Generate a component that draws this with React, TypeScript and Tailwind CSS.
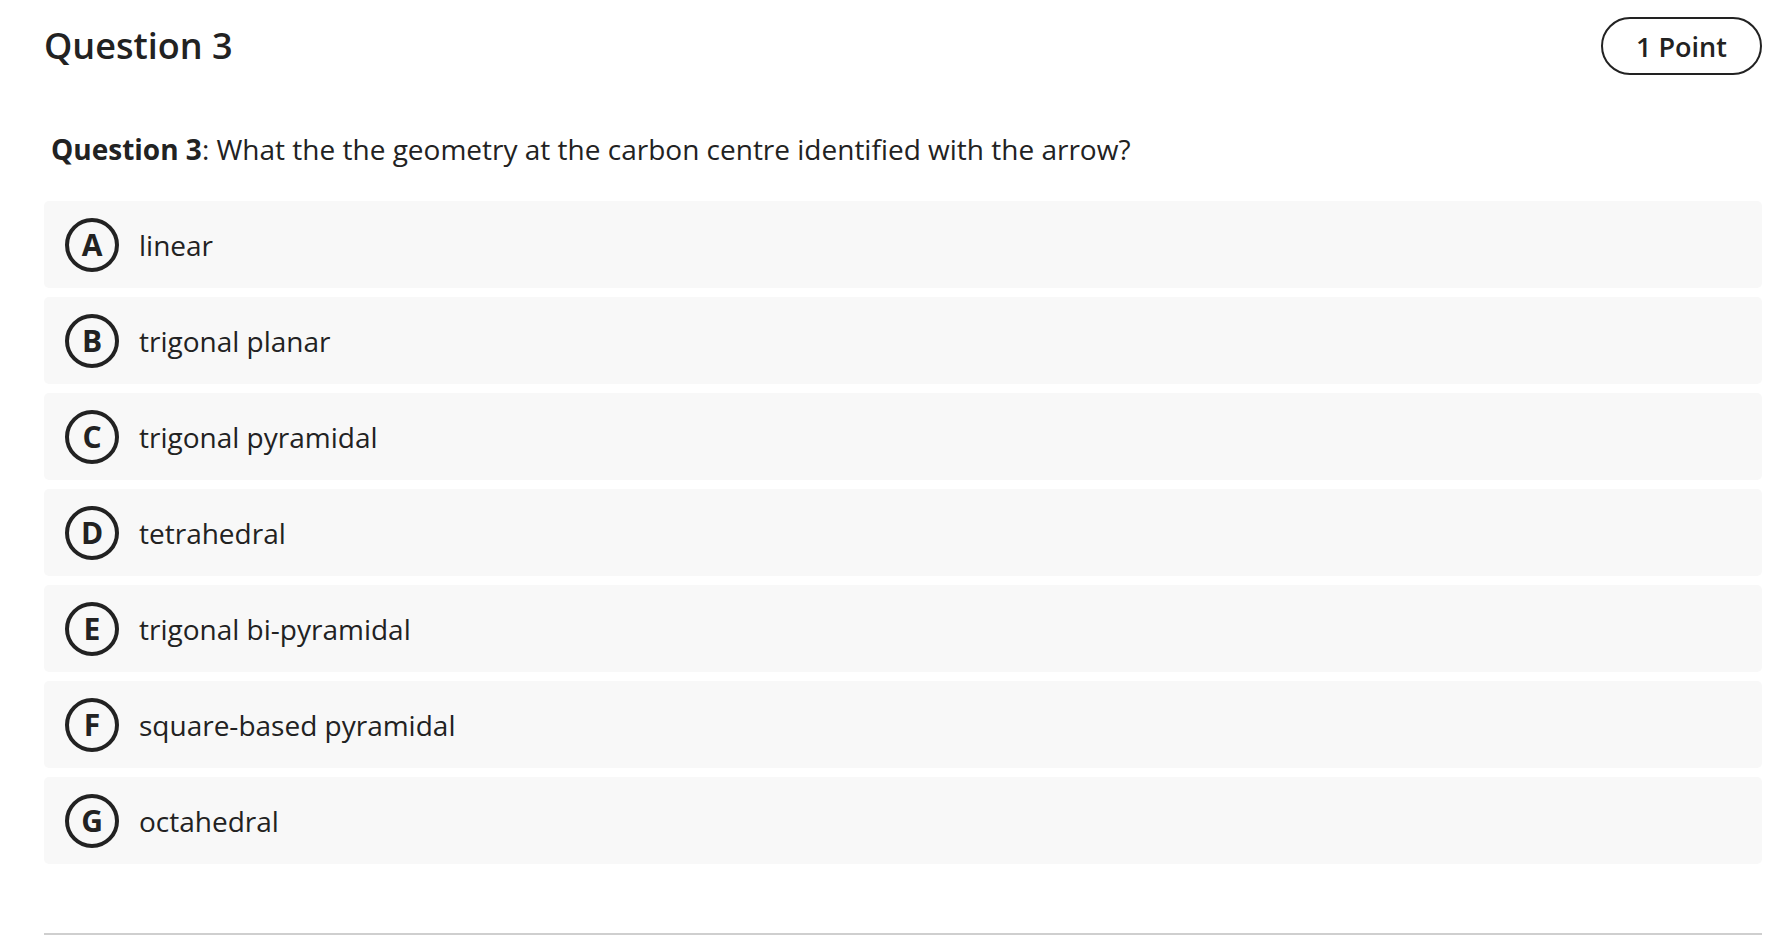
const options = [
  { key: "A", label: "linear" },
  { key: "B", label: "trigonal planar" },
  { key: "C", label: "trigonal pyramidal" },
  { key: "D", label: "tetrahedral" },
  { key: "E", label: "trigonal bi-pyramidal" },
  { key: "F", label: "square-based pyramidal" },
  { key: "G", label: "octahedral" },
];

export default function App() {
  return (
    <div
      className="min-h-screen bg-white pl-[44px] pr-[20px] pt-[17px] text-[#222]"
      style={{ fontFamily: '"Open Sans", "Noto Sans", sans-serif' }}
    >
      <div className="flex items-center justify-between h-[58px]">
        <h2 className="text-[36px] font-semibold leading-[58px]">Question 3</h2>
        <div className="flex items-center justify-center w-[161px] h-[58px] rounded-full border-2 border-[#222] text-[27px] font-semibold leading-none">
          1 Point
        </div>
      </div>

      <p className="mt-[54px] pl-[7px] text-[28px] leading-[40px]">
        <span className="font-bold">Question 3</span>: What the the geometry at the carbon centre identified with the arrow?
      </p>

      <div className="mt-[32px] flex flex-col gap-[9px]">
        {options.map((o) => (
          <div
            key={o.key}
            className="flex items-center h-[87px] rounded-[5px] bg-[#f8f8f8] pl-[21px]"
          >
            <span className="flex items-center justify-center w-[54px] h-[54px] rounded-full border-[4px] border-[#222] text-[30px] font-bold leading-none">
              {o.key}
            </span>
            <span className="ml-[20px] text-[28px] leading-[40px]">{o.label}</span>
          </div>
        ))}
      </div>

      <div className="mt-[69px] h-[2px] bg-[#cfcfcf]" />
    </div>
  );
}
